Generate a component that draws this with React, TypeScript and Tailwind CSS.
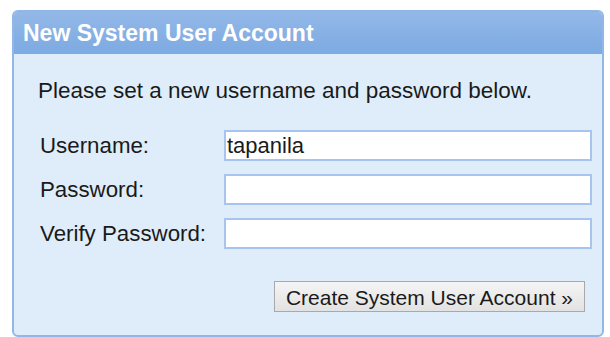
export default function App() {
  return (
    <div className="w-[610px] h-[337px] bg-white pt-[10px] pl-[12px] font-['Liberation_Sans',Arial,sans-serif]">
      <div className="w-[592px] h-[327px] rounded-[6px] border-2 border-[#92b6e6] bg-[#deedf9] overflow-hidden flex flex-col">
        <div className="h-[42px] bg-gradient-to-b from-[#93b8e8] to-[#7caae2] flex items-center pl-[9px] text-white font-bold text-[23px]">
          New System User Account
        </div>
        <div className="flex-1 pl-[24px] pr-[9px] pt-[24px] text-[#1a1a1a]">
          <p className="text-[22.5px] leading-[26px]">Please set a new username and password below.</p>
          <div className="mt-[26px] flex flex-col gap-[13px]">
            {[
              { label: 'Username:', value: 'tapanila' },
              { label: 'Password:', value: '' },
              { label: 'Verify Password:', value: '' },
            ].map((row) => (
              <div key={row.label} className="flex items-center h-[31px]">
                <label className="w-[186px] pl-[2px] text-[22.3px] leading-[31px]">{row.label}</label>
                <input
                  readOnly
                  value={row.value}
                  className="w-[368px] h-[31px] bg-white border-2 border-[#a6c4ee] px-[1px] text-[22px] text-[#1a1a1a] outline-none"
                />
              </div>
            ))}
          </div>
          <div className="flex justify-end pr-[8px] mt-[32px]">
            <button className="h-[31px] px-[11px] border border-[#a9a9a9] bg-gradient-to-b from-[#f5f5f5] to-[#e2e2e2] text-[21px] text-[#1a1a1a]">
              Create System User Account »
            </button>
          </div>
        </div>
      </div>
    </div>
  )
}
